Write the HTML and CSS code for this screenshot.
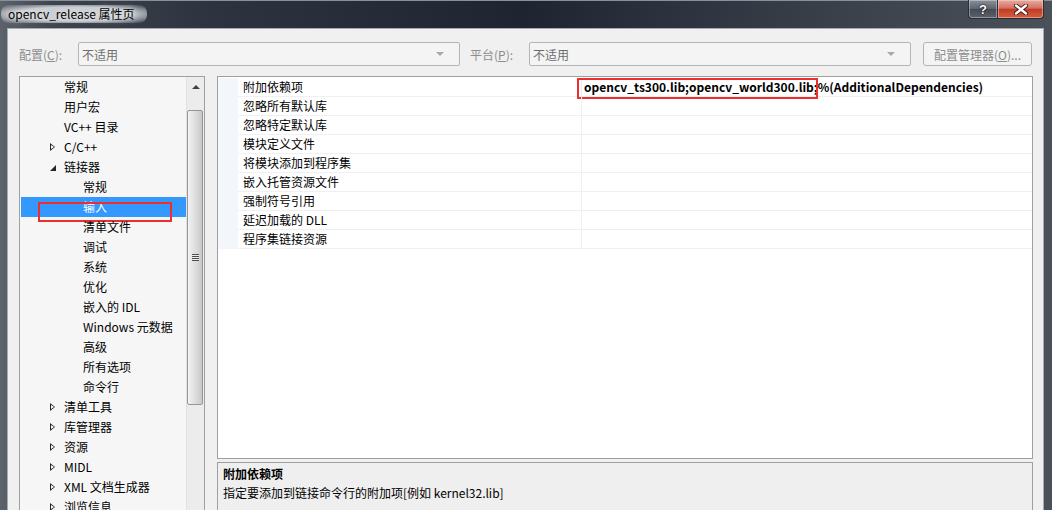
FILE: index.html
```html
<!DOCTYPE html>
<html lang="zh-CN">
  <head>
    <meta charset="UTF-8" />
    <title>opencv_release 属性页</title>
    <link rel="stylesheet" href="styles.css">
  </head>
  <body>
    <div class="window">
      <div class="titlebar">
        <span class="title">opencv_release 属性页</span>
        <div class="caption-btns">
          <span class="cbtn help">?</span>
          <span class="cbtn close">
            <svg width="14" height="11" viewBox="0 0 14 11">
              <path d="M2 1.5 L12 9.5 M12 1.5 L2 9.5" stroke="#3a1a16" stroke-width="4.2" stroke-linecap="round" />
              <path d="M2 1.5 L12 9.5 M12 1.5 L2 9.5" stroke="#fff" stroke-width="2.4" stroke-linecap="round" />
            </svg>
          </span>
        </div>
      </div>

      <div class="client">
        <div class="toolbar">
          <span class="field-label">配置(<u>C</u>):</span>
          <div class="combo"><span>不适用</span><i class="caret"></i></div>
          <span class="field-label second">平台(<u>P</u>):</span>
          <div class="combo"><span>不适用</span><i class="caret"></i></div>
          <button class="mgr-btn">配置管理器(<u>O</u>)...</button>
        </div>

        <div class="main">
          <div class="tree">
            <ul class="tree-list">
              <li class="l1"><i></i>常规</li>
              <li class="l1"><i></i>用户宏</li>
              <li class="l1"><i></i>VC++ 目录</li>
              <li class="l1"><i class="closed"></i>C/C++</li>
              <li class="l1"><i class="open"></i>链接器</li>
              <li class="l2"><i></i>常规</li>
              <li class="l2 selected"><i></i>输入<span class="mark tree-mark"></span></li>
              <li class="l2"><i></i>清单文件</li>
              <li class="l2"><i></i>调试</li>
              <li class="l2"><i></i>系统</li>
              <li class="l2"><i></i>优化</li>
              <li class="l2"><i></i>嵌入的 IDL</li>
              <li class="l2"><i></i>Windows 元数据</li>
              <li class="l2"><i></i>高级</li>
              <li class="l2"><i></i>所有选项</li>
              <li class="l2"><i></i>命令行</li>
              <li class="l1"><i class="closed"></i>清单工具</li>
              <li class="l1"><i class="closed"></i>库管理器</li>
              <li class="l1"><i class="closed"></i>资源</li>
              <li class="l1"><i class="closed"></i>MIDL</li>
              <li class="l1"><i class="closed"></i>XML 文档生成器</li>
              <li class="l1"><i class="closed"></i>浏览信息</li>
            </ul>
            <div class="vscroll">
              <div class="arrow-up"></div>
              <div class="thumb"><span class="grip"></span></div>
            </div>
          </div>

          <div class="right">
            <div class="grid">
              <div class="row">
                <div class="gutter"></div>
                <div class="name">附加依赖项</div>
                <div class="value">
                  <b>opencv_ts300.lib;opencv_world300.lib;%(AdditionalDependencies)</b>
                  <span class="mark value-mark"></span>
                </div>
              </div>
              <div class="row"><div class="gutter"></div><div class="name">忽略所有默认库</div><div class="value"></div></div>
              <div class="row"><div class="gutter"></div><div class="name">忽略特定默认库</div><div class="value"></div></div>
              <div class="row"><div class="gutter"></div><div class="name">模块定义文件</div><div class="value"></div></div>
              <div class="row"><div class="gutter"></div><div class="name">将模块添加到程序集</div><div class="value"></div></div>
              <div class="row"><div class="gutter"></div><div class="name">嵌入托管资源文件</div><div class="value"></div></div>
              <div class="row"><div class="gutter"></div><div class="name">强制符号引用</div><div class="value"></div></div>
              <div class="row"><div class="gutter"></div><div class="name">延迟加载的 DLL</div><div class="value"></div></div>
              <div class="row"><div class="gutter"></div><div class="name">程序集链接资源</div><div class="value"></div></div>
            </div>

            <div class="desc">
              <div class="desc-title">附加依赖项</div>
              <div>指定要添加到链接命令行的附加项[例如 kernel32.lib]</div>
            </div>
          </div>
        </div>
      </div>
    </div>
  </body>
</html>
```

FILE: styles.css
```css
html,
body {
  margin: 0;
  width: 1052px;
  height: 510px;
  overflow: hidden;
}
body {
  font-family: "Noto Sans CJK SC", sans-serif;
  font-size: 12px;
  color: #000;
  background: #2a313b;
}

.window {
  height: 510px;
  display: flex;
  flex-direction: column;
  background: linear-gradient(
    90deg,
    #5d636b 0%,
    #3d444e 5%,
    #2d343f 20%,
    #1f2530 50%,
    #2a313c 62%,
    #3a414b 80%,
    #4b5159 100%
  );
  border-top: 1px solid #8a9099;
  box-sizing: border-box;
}

/* caption */
.titlebar {
  height: 27px;
  display: flex;
  align-items: flex-start;
  flex-shrink: 0;
}
.title {
  margin: 4px 0 0 1px;
  padding: 1px 12px 1px 7px;
  line-height: 16px;
  border-radius: 8px;
  background: radial-gradient(
    ellipse at center,
    rgba(225, 228, 232, 0.85) 55%,
    rgba(225, 228, 232, 0) 100%
  );
  text-shadow: 0 0 6px #fff;
}
.caption-btns {
  margin-left: auto;
  margin-right: 8px;
  margin-top: -1px;
  display: flex;
}
.cbtn {
  height: 19px;
  border: 1px solid #2a2f36;
  border-top: none;
  display: flex;
  align-items: center;
  justify-content: center;
  box-sizing: border-box;
}
.help {
  width: 29px;
  border-radius: 0 0 0 4px;
  border-right: none;
  color: #fff;
  font-weight: bold;
  font-family: "Liberation Sans", sans-serif;
  font-size: 13px;
  text-shadow: 0 0 2px #000, 0 0 1px #000;
  background: linear-gradient(#8b9098, #5f656e 48%, #454b54 52%, #5b626c);
  box-shadow: inset 0 0 0 1px rgba(255, 255, 255, 0.35);
}
.close {
  width: 47px;
  border-radius: 0 0 4px 0;
  background: linear-gradient(#e7aca3, #d46f62 45%, #c43a26 52%, #d0603f);
  box-shadow: inset 0 0 0 1px rgba(255, 220, 210, 0.45);
}

/* dialog body */
.client {
  flex: 1;
  margin: 0 8px 0 7px;
  background: #f0f0f0;
  border: 1px solid #a4acb6;
  border-bottom: none;
  padding: 13px 10px 0 11px;
}

.toolbar {
  height: 24px;
  display: flex;
  align-items: center;
}
.field-label {
  width: 59px;
  color: #8d8d8d;
  flex-shrink: 0;
}
.field-label.second {
  margin-left: 10px;
}
.combo {
  width: 382px;
  height: 24px;
  box-sizing: border-box;
  border: 1px solid #b5b5b5;
  border-radius: 2px;
  background: #f4f4f4;
  display: flex;
  align-items: center;
  padding: 0 0 0 3px;
  color: #6d6d6d;
  position: relative;
}
.caret {
  margin-left: auto;
  margin-right: 15px;
  width: 0;
  height: 0;
  border-left: 4px solid transparent;
  border-right: 4px solid transparent;
  border-top: 4px solid #a8a8a8;
}
.mgr-btn {
  margin-left: 12px;
  width: 109px;
  height: 24px;
  font: inherit;
  color: #8d8d8d;
  background: #f4f4f4;
  border: 1px solid #b3b3b3;
  border-radius: 3px;
  padding: 0;
}

.main {
  margin-top: 10px;
  display: flex;
  height: 460px;
}

/* category tree */
.tree {
  width: 186px;
  box-sizing: border-box;
  border: 1px solid #a0a0a0;
  background: #f6f6f6;
  display: flex;
  flex-shrink: 0;
}
.tree-list {
  list-style: none;
  margin: 0;
  padding: 0 0 0 1px;
  flex: 1;
}
.tree-list li {
  height: 20px;
  line-height: 20px;
  display: flex;
  align-items: center;
  white-space: nowrap;
  position: relative;
}
.tree-list .l1 {
  padding-left: 28px;
}
.tree-list .l2 {
  padding-left: 47px;
}
.tree-list i {
  width: 15px;
  height: 20px;
  flex-shrink: 0;
  position: relative;
}
.tree-list i.closed::before {
  content: "";
  position: absolute;
  left: 1px;
  top: 6px;
  border-top: 4.5px solid transparent;
  border-bottom: 4.5px solid transparent;
  border-left: 5px solid #262626;
}
.tree-list i.closed::after {
  content: "";
  position: absolute;
  left: 2px;
  top: 8px;
  border-top: 2.5px solid transparent;
  border-bottom: 2.5px solid transparent;
  border-left: 3px solid #fff;
}
.tree-list i.open::before {
  content: "";
  position: absolute;
  left: 1px;
  top: 8px;
  border-left: 6px solid transparent;
  border-bottom: 6px solid #262626;
}
.tree-list .selected {
  background: #3399ff;
  color: #fff;
}

.vscroll {
  width: 17px;
  background: #ececec;
  border-left: 1px solid #e2e2e2;
  flex-shrink: 0;
  display: flex;
  flex-direction: column;
}
.arrow-up {
  height: 33px;
  position: relative;
}
.arrow-up::before {
  content: "";
  position: absolute;
  left: 5px;
  top: 8px;
  border-left: 4px solid transparent;
  border-right: 4px solid transparent;
  border-bottom: 4px solid #404040;
}
.thumb {
  height: 295px;
  margin: 0 1px 0 0;
  border: 1px solid #979797;
  border-radius: 2px;
  box-sizing: border-box;
  background: linear-gradient(90deg, #f2f2f2, #e2e2e2 40%, #d6d6d6 70%, #c8c8c8);
  display: flex;
  align-items: center;
  justify-content: center;
}
.grip {
  width: 7px;
  height: 7px;
  background: repeating-linear-gradient(#4e4e4e 0 1px, #eaeaea 1px 2px);
}

/* property grid */
.right {
  margin-left: 12px;
  width: 818px;
  display: flex;
  flex-direction: column;
}
.grid {
  height: 383px;
  box-sizing: border-box;
  border: 1px solid #a0a0a0;
  background: #fff;
  padding-top: 1px;
}
.row {
  display: flex;
  height: 19px;
  line-height: 18px;
}
.gutter {
  width: 20px;
  background: #f3f6fb;
  flex-shrink: 0;
}
.name {
  width: 338px;
  padding-left: 5px;
  border-bottom: 1px solid #f0f0f0;
  flex-shrink: 0;
}
.value {
  flex: 1;
  padding-left: 2px;
  border-left: 1px solid #f0f0f0;
  border-bottom: 1px solid #f0f0f0;
  position: relative;
  white-space: nowrap;
}

/* red call-out frames */
.mark {
  position: absolute;
  border: 2px solid #ee2e2e;
  box-sizing: border-box;
  pointer-events: none;
}
.tree-mark {
  left: 17px;
  top: 5px;
  width: 134px;
  height: 20px;
}
.value-mark {
  left: -5px;
  top: 0;
  width: 241px;
  height: 21px;
}

.desc {
  margin-top: 3px;
  height: 60px;
  box-sizing: border-box;
  border: 1px solid #a0a0a0;
  background: #efefef;
  padding: 1px 5px;
  line-height: 19px;
}
.desc-title {
  font-weight: bold;
}
```
